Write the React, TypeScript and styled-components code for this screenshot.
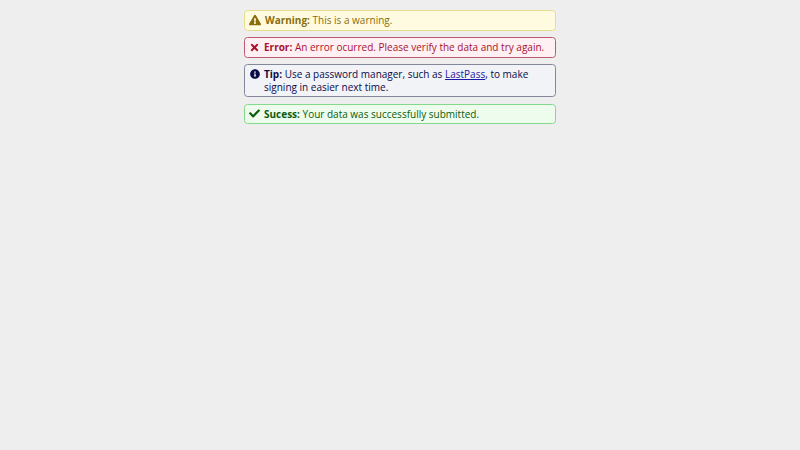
import React from "react";
import styled, { createGlobalStyle } from "styled-components";
import { FaCheck, FaExclamationTriangle, FaInfoCircle, FaTimes } from "react-icons/fa";

const GlobalStyle = createGlobalStyle`
  html, body {
    margin: 0;
    background: #eeeeee;
  }
  body {
    font-family: "Open Sans", sans-serif;
    font-size: 10px;
    line-height: 12.5px;
  }
`;

const kinds = {
  warning: { color: "#8a6d0b", border: "#e6dc8c", bg: "#fffbe0" },
  error: { color: "#a8102f", border: "#bd5a72", bg: "#fff0f4" },
  tip: { color: "#0a0a4a", border: "#83889a", bg: "#f1f3f6" },
  success: { color: "#0b5c0b", border: "#84d98e", bg: "#eefcee" },
};

type Kind = keyof typeof kinds;

const Alert = ({ kind, icon, children }: { kind: Kind; icon: React.ReactNode; children: React.ReactNode }) => (
  <SAlert $kind={kind}>
    <SIcon>{icon}</SIcon>
    <SText>{children}</SText>
  </SAlert>
);

const App = () => (
  <>
    <GlobalStyle />
    <SPage>
      <Alert kind="warning" icon={<FaExclamationTriangle size={12} />}>
        <b>Warning:</b> This is a warning.
      </Alert>
      <Alert kind="error" icon={<FaTimes size={11} />}>
        <b>Error:</b> An error ocurred. Please verify the data and try again.
      </Alert>
      <Alert kind="tip" icon={<FaInfoCircle size={10} />}>
        <b>Tip:</b> Use a password manager, such as <SLink href="#">LastPass</SLink>, to make signing in easier next time.
      </Alert>
      <Alert kind="success" icon={<FaCheck size={11} />}>
        <b>Sucess:</b> Your data was successfully submitted.
      </Alert>
    </SPage>
  </>
);

export default App;

const SPage = styled.div`
  width: 312.5px;
  margin: 0 auto;
  padding-top: 10px;
  display: flex;
  flex-direction: column;
  gap: 6.5px;
`;

const SAlert = styled.div<{ $kind: Kind }>`
  display: flex;
  gap: 4px;
  padding: 3px 5px 3px 4.25px;
  border: 1px solid ${(p) => kinds[p.$kind].border};
  border-radius: 3.5px;
  color: ${(p) => kinds[p.$kind].color};
  background: ${(p) => kinds[p.$kind].bg};
`;

const SIcon = styled.span`
  flex: 0 0 11px;
  height: 12.5px;
  display: flex;
  align-items: center;
  justify-content: center;
`;

const SText = styled.div`
  flex: 1;
  min-width: 0;
`;

const SLink = styled.a`
  color: #1a1aa6;
`;
